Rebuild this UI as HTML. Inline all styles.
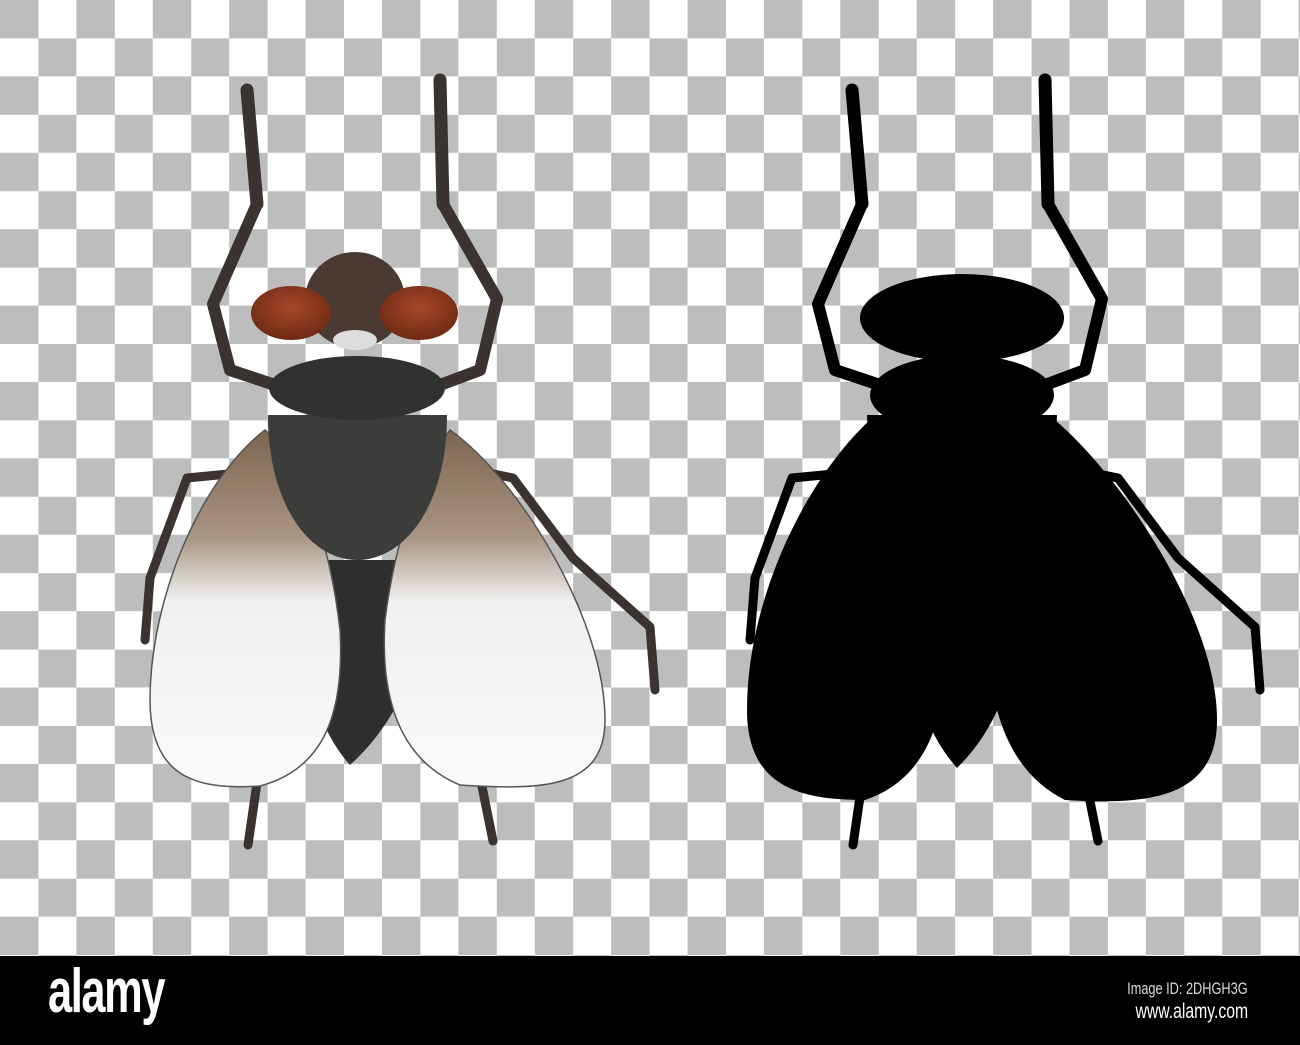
<!DOCTYPE html>
<html><head><meta charset="utf-8"><style>
html,body{margin:0;padding:0}
body{width:1300px;height:1045px;position:relative;overflow:hidden;font-family:"Liberation Sans",sans-serif;
background-color:#fff;
background-image:conic-gradient(#fff 0 25%,#bdbdbd 0 50%,#fff 0 75%,#bdbdbd 0);
background-size:76.4px 76.4px;}
svg{position:absolute;left:0;top:0}
.bar{position:absolute;left:0;top:956px;width:1300px;height:89px;background:#000;color:#fff}
.logo{position:absolute;left:48px;top:0px;font-size:62px;font-weight:bold;letter-spacing:-2px;transform:scaleX(.7);transform-origin:left top}
.id{position:absolute;right:52px;top:23px;font-size:17px;transform:scaleX(.75);transform-origin:right top;color:#ddd}
.www{position:absolute;right:52px;top:44px;font-size:21px;transform:scaleX(.75);transform-origin:right top}
</style></head><body>
<svg width="1300" height="956" viewBox="0 0 1300 956">
<defs>
<linearGradient id="wg" x1="0" y1="0" x2="0" y2="1">
<stop offset="0" stop-color="#7d6550"/><stop offset=".3" stop-color="#a89582"/><stop offset=".48" stop-color="#f0f0f0"/><stop offset="1" stop-color="#fafafa"/></linearGradient>
<radialGradient id="eg" cx=".5" cy=".4" r=".6"><stop offset="0" stop-color="#a8482a"/><stop offset="1" stop-color="#6e2a14"/></radialGradient>
</defs>
<g fill="none" stroke="#3a3330" stroke-linejoin="round" stroke-linecap="round">
<path d="M257 204 L247 90" stroke-width="13"/>
<path d="M443 204 L440 80" stroke-width="13"/>
<path d="M275 385 L230 370 L213 304 L257 204" stroke-width="12"/>
<path d="M440 385 L480 370 L497 299 L443 204" stroke-width="12"/>
<path d="M270 470 L187 478 L150 578 L145 640" stroke-width="9"/>
<path d="M450 465 L513 478 L573 558 L650 627 L655 690" stroke-width="9"/>
<path d="M300 700 L260 762 L248 845" stroke-width="9"/>
<path d="M420 700 L470 727 L493 841" stroke-width="9"/>
</g>
<path d="M300 560 C298 650 310 720 350 765 C400 720 430 650 430 560 Z" fill="#2e2e2e"/>
<g fill="url(#wg)" stroke="#555" stroke-width="1.5">
<path d="M265 430 C200 480 150 600 150 700 C150 780 200 790 260 786 C320 770 345 720 340 630 C330 540 300 460 265 430 Z"/>
<path d="M450 430 C520 480 605 620 605 720 C605 790 540 790 460 785 C400 760 380 700 385 620 C395 540 420 470 450 430 Z"/>
</g>
<path d="M268 415 C268 505 310 560 357 560 C405 560 447 505 447 415 Z" fill="#3a3d3a"/>
<ellipse cx="357" cy="388" rx="88" ry="32" fill="#2f322f"/>
<ellipse cx="355" cy="300" rx="50" ry="48" fill="#4a3a32"/>
<ellipse cx="291" cy="313" rx="40" ry="27" fill="url(#eg)"/>
<ellipse cx="419" cy="313" rx="39" ry="27" fill="url(#eg)"/>
<ellipse cx="355" cy="340" rx="22" ry="10" fill="#ddd"/>
<g transform="translate(605,0)">
<g fill="none" stroke="#000" stroke-linejoin="round" stroke-linecap="round">
<path d="M257 204 L247 90" stroke-width="13"/>
<path d="M443 204 L440 80" stroke-width="13"/>
<path d="M275 385 L230 370 L213 304 L257 204" stroke-width="12"/>
<path d="M440 385 L480 370 L497 299 L443 204" stroke-width="12"/>
<path d="M270 470 L187 478 L150 578 L145 640" stroke-width="9"/>
<path d="M450 465 L513 478 L573 558 L650 627 L655 690" stroke-width="9"/>
<path d="M300 700 L260 762 L248 845" stroke-width="9"/>
<path d="M420 700 L470 727 L493 841" stroke-width="9"/>
</g>
<g fill="#000">
<path d="M295 500 C295 650 310 720 352 768 C400 720 425 650 425 500 Z"/>
<path d="M265 420 C200 480 142 600 142 710 C142 790 200 800 260 800 C320 780 345 720 340 630 C330 540 300 460 265 420 Z"/>
<path d="M450 420 C520 480 612 620 612 720 C612 800 540 805 460 800 C400 770 380 700 385 620 C395 540 420 470 450 420 Z"/>
<path d="M262 415 C265 505 310 560 357 560 C405 560 450 505 452 415 Z"/>
<ellipse cx="357" cy="395" rx="92" ry="40"/>
<ellipse cx="357" cy="318" rx="102" ry="44"/>
</g>
</g>
</svg>
<div class="bar">
<div class="logo">alamy</div>
<div class="id">Image ID: 2DHGH3G</div>
<div class="www">www.alamy.com</div>
</div>
</body></html>
